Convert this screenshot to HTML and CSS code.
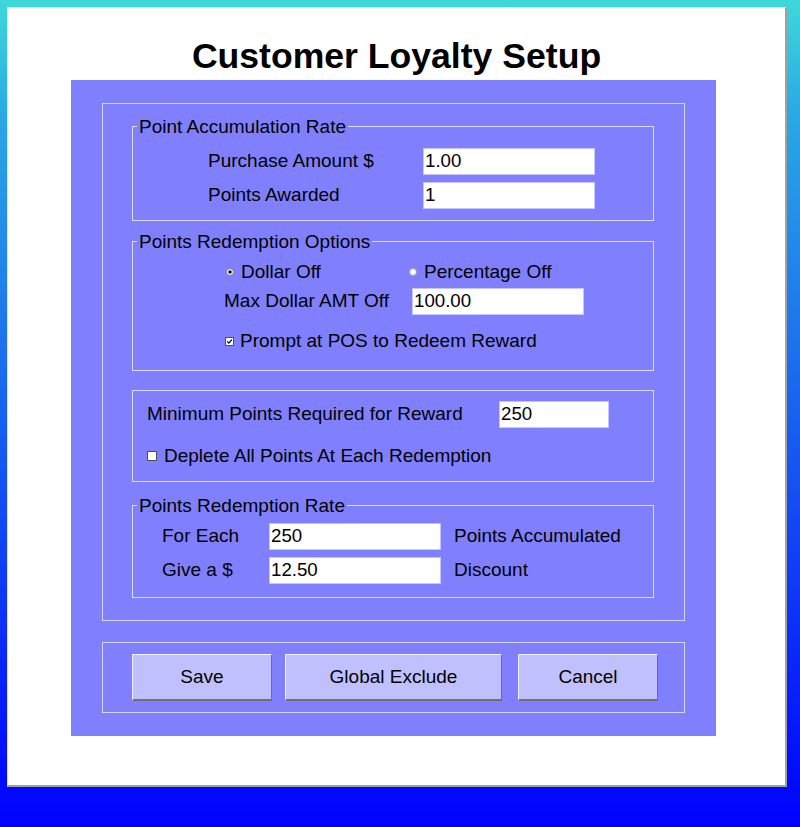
FILE: index.html
```html
<!DOCTYPE html>
<html lang="en">
<head>
    <meta charset="UTF-8">
    <meta name="viewport" content="width=device-width, initial-scale=1.0">
    <title>Customer Loyalty Setup</title>
    <link rel="stylesheet" href="styles.css">
</head>
<body>

<div class="frame">
    <h1 class="title">Customer Loyalty Setup</h1>

    <div class="panel">
        <div class="settings">
            <fieldset class="group accrual">
                <legend>Point Accumulation Rate</legend>
                <div class="row">
                    <label class="lbl" for="purchaseAmount">Purchase Amount $</label>
                    <input type="text" id="purchaseAmount" value="1.00">
                </div>
                <div class="row">
                    <label class="lbl" for="pointsAwarded">Points Awarded</label>
                    <input type="text" id="pointsAwarded" value="1">
                </div>
            </fieldset>

            <fieldset class="group redeem">
                <legend>Points Redemption Options</legend>
                <div class="row choice">
                    <span class="option first">
                        <svg class="radio" width="8" height="8" viewBox="0 0 8 8"><circle cx="4" cy="4" r="3.5" fill="#fff" stroke="#7c7c8c"/><circle cx="4" cy="4" r="1.7" fill="#000"/></svg>
                        Dollar Off
                    </span>
                    <span class="option">
                        <svg class="radio" width="8" height="8" viewBox="0 0 8 8"><circle cx="4" cy="4" r="3.5" fill="#fff" stroke="#9c9cac"/></svg>
                        Percentage Off
                    </span>
                </div>
                <div class="row max">
                    <label class="lbl" for="maxOff">Max Dollar AMT Off</label>
                    <input type="text" id="maxOff" value="100.00">
                </div>
                <div class="row check">
                    <svg class="box" width="9" height="9" viewBox="0 0 9 9"><rect x="0.5" y="0.5" width="8" height="8" fill="#fff" stroke="#505050"/><path d="M2.2 4.4 L3.8 6.1 L6.9 2.6" fill="none" stroke="#000" stroke-width="1.3"/></svg>
                    <span>Prompt at POS to Redeem Reward</span>
                </div>
            </fieldset>

            <fieldset class="group minimum">
                <div class="row">
                    <label class="lbl" for="minPoints">Minimum Points Required for Reward</label>
                    <input type="text" id="minPoints" class="short" value="250">
                </div>
                <div class="row check">
                    <svg class="box" width="10" height="10" viewBox="0 0 10 10"><rect x="0.5" y="0.5" width="9" height="9" fill="#fff" stroke="#505050"/></svg>
                    <span>Deplete All Points At Each Redemption</span>
                </div>
            </fieldset>

            <fieldset class="group rate">
                <legend>Points Redemption Rate</legend>
                <div class="row">
                    <label class="lbl" for="forEach">For Each</label>
                    <input type="text" id="forEach" value="250">
                    <span class="unit">Points Accumulated</span>
                </div>
                <div class="row">
                    <label class="lbl" for="giveAmount">Give a $</label>
                    <input type="text" id="giveAmount" value="12.50">
                    <span class="unit">Discount</span>
                </div>
            </fieldset>
        </div>

        <div class="actions">
            <button type="button" class="btn save">Save</button>
            <button type="button" class="btn exclude">Global Exclude</button>
            <button type="button" class="btn cancel">Cancel</button>
        </div>
    </div>
</div>

</body>
</html>
```

FILE: styles.css
```css
* {
    box-sizing: border-box;
}
body {
    margin: 0;
    height: 827px;
    overflow: hidden;
    font-family: "Liberation Sans", Arial, sans-serif;
    font-size: 19px;
    color: #000;
    background: linear-gradient(#3ed8da, #2aa8e4 14%, #0000ff 100%);
}
.frame {
    margin: 7px 0 0 7px;
    width: 780px;
    height: 780px;
    padding-top: 28px;
    background-color: #fff;
    border-top: 1px solid #e2e2e2;
    border-left: 1px solid #e2e2e2;
    border-right: 2px solid #a0a0a0;
    border-bottom: 2px solid #a0a0a0;
}
.title {
    margin: 0;
    text-align: center;
    font-size: 35.6px;
    font-weight: bold;
    line-height: 40px;
}
.panel {
    margin: 4px 0 0 63px;
    width: 645px;
    height: 656px;
    padding: 23px 31px 0;
    background-color: #8080ff;
}
.settings {
    border: 1px solid #d4d4e4;
    padding: 12px 0 22px 29px;
}
.group {
    margin: 0;
    padding: 0;
    width: 522px;
    min-width: 0;
    border: 1px solid #dcdcec;
}
.group legend {
    margin-left: 4px;
    padding: 0 2px;
    line-height: 21px;
}
.row {
    display: flex;
    align-items: center;
}
.lbl {
    flex: none;
    margin-top: -2px;
}
input[type="text"] {
    width: 172px;
    height: 27px;
    padding: 0 0 2px 1px;
    font-family: inherit;
    font-size: 18.7px;
    color: #000;
    background-color: #fff;
    border: 1px solid #c6c6ff;
    border-radius: 0;
    outline: none;
}
input.short {
    width: 110px;
}

/* point accumulation */
.accrual {
    padding-top: 11px;
    padding-bottom: 11px;
}
.accrual .row {
    padding-left: 75px;
}
.accrual .row + .row {
    margin-top: 7px;
}
.accrual .lbl {
    width: 215px;
}

/* redemption options */
.redeem {
    margin-top: 10px;
    padding-top: 9px;
    padding-bottom: 19px;
}
.redeem .row {
    padding-left: 91px;
}
.choice {
    height: 22px;
}
.option {
    display: flex;
    align-items: center;
    gap: 7px;
}
.option.first {
    margin-left: 2px;
    width: 183px;
}
.max {
    margin-top: 5px;
}
.max .lbl {
    width: 188px;
}
.check {
    height: 20px;
    gap: 6px;
}
.redeem .check {
    margin-top: 16px;
    padding-left: 92px;
}
.box, .radio {
    flex: none;
    display: block;
}

/* minimum points */
.minimum {
    margin-top: 19px;
    padding-top: 10px;
    padding-bottom: 15px;
}
.minimum .row {
    padding-left: 14px;
}
.minimum .lbl {
    width: 352px;
}
.minimum .check {
    margin-top: 18px;
    gap: 7px;
}

/* redemption rate */
.rate {
    margin-top: 13px;
    padding-top: 7px;
    padding-bottom: 13px;
}
.rate .row {
    padding-left: 29px;
}
.rate .row + .row {
    margin-top: 7px;
}
.rate .lbl {
    width: 107px;
}
.unit {
    margin-left: 13px;
    margin-top: -2px;
}

/* buttons */
.actions {
    margin-top: 21px;
    display: flex;
    padding: 11px 0 11px 29px;
    border: 1px solid #d4d4e4;
}
.btn {
    height: 47px;
    width: 140px;
    padding: 0;
    font-family: inherit;
    font-size: 19px;
    color: #000;
    background-color: #c0c0ff;
    border-top: 1px solid #f2f2ff;
    border-left: 1px solid #f2f2ff;
    border-right: 1px solid #707078;
    border-bottom: 2px solid #707078;
    cursor: pointer;
}
.btn.exclude {
    width: 217px;
    margin-left: 13px;
}
.btn.cancel {
    margin-left: 16px;
}
```
